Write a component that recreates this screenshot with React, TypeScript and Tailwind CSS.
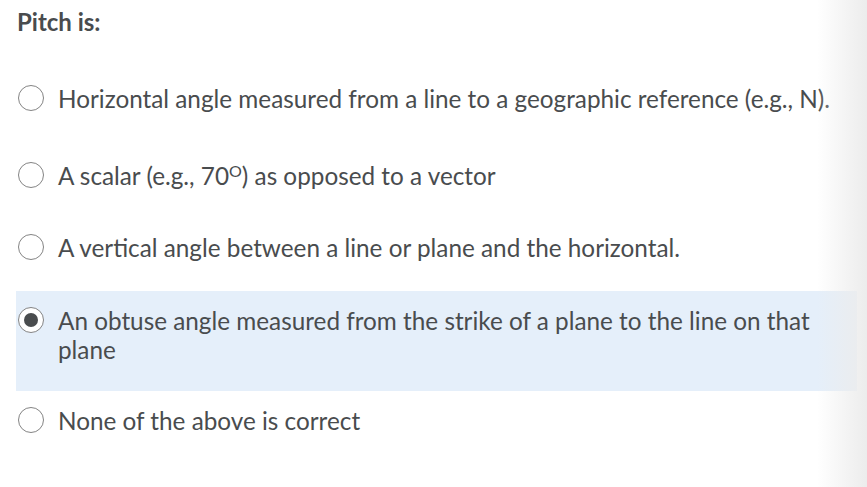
import React from "react";

const options = [
  { id: 1, gap: "mb-[6px]", label: <>Horizontal angle measured from a line to a geographic reference (e.g., N).</> },
  {
    id: 2,
    gap: "mb-[1px]",
    label: (
      <>
        A scalar (e.g., 70<sup className="text-[16px]">O</sup>) as opposed to a vector
      </>
    ),
  },
  { id: 3, gap: "mb-[2px]", label: <>A vertical angle between a line or plane and the horizontal.</> },
  { id: 4, gap: "", label: <>An obtuse angle measured from the strike of a plane to the line on that plane</> },
  { id: 5, gap: "", label: <>None of the above is correct</> },
];

const Radio = ({ checked }: { checked: boolean }) => (
  <span className="mt-[1px] flex size-[26px] shrink-0 items-center justify-center rounded-full border border-[#848484] bg-white">
    {checked && <span className="size-[14px] rounded-full bg-[#494c4e]" />}
  </span>
);

const App = () => {
  const selected = 4;
  return (
    <div className="relative h-[487px] w-[867px] overflow-hidden bg-white font-['Lato',sans-serif] text-[#494c4e]">
      <h1 className="pl-[17px] pt-[7px] text-[24px] font-bold leading-[29px]">Pitch is:</h1>
      <div className="mt-[33px] flex flex-col">
        {options.map((o) => (
          <label
            key={o.id}
            className={`ml-[16px] mr-[10px] flex items-start gap-[14px] pb-[27px] pl-[2px] pr-[24px] pt-[15px] ${
              o.id === selected ? "bg-[#e5effa]" : ""
            } ${o.gap}`}
          >
            <Radio checked={o.id === selected} />
            <span className="text-[24.3px] leading-[29px]">{o.label}</span>
          </label>
        ))}
      </div>
      <div className="pointer-events-none absolute right-0 top-0 h-full w-[50px] bg-gradient-to-r from-white/0 to-[#ececec]" />
    </div>
  );
};

export default App;
